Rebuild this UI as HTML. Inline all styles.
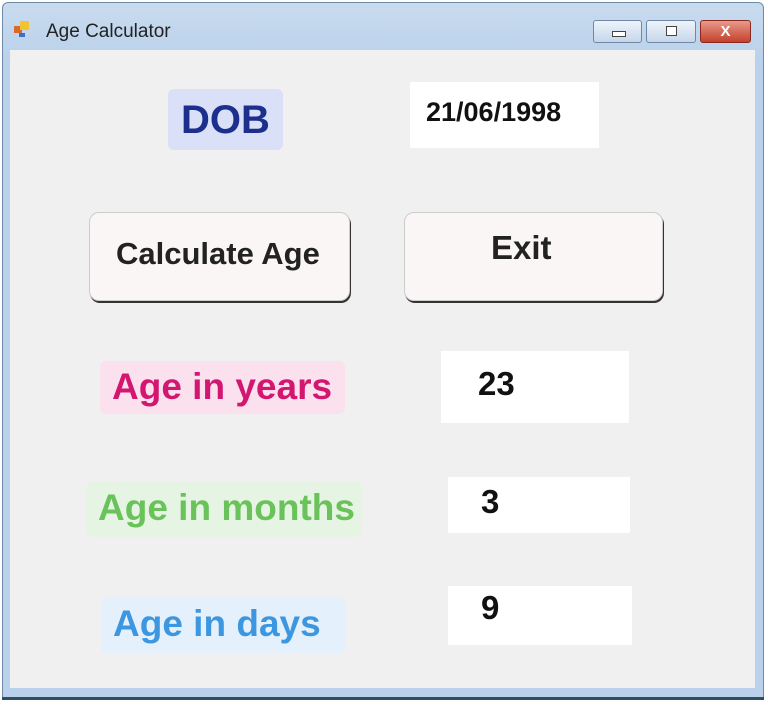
<!DOCTYPE html>
<html><head><style>
body{margin:0;width:768px;height:706px;overflow:hidden;background:#fff;font-family:"Liberation Sans",sans-serif;position:relative}
.frame{position:absolute;left:2px;top:2px;width:762px;height:696px;background:linear-gradient(#c9dbef,#b9d1ea 60px,#b9d1ea);border:1px solid #6e8aa8;border-radius:6px 6px 0 0;box-sizing:border-box}
.client{position:absolute;left:10px;top:50px;width:745px;height:638px;background:#f0f0f0}
.bottom{position:absolute;left:2px;top:697px;width:762px;height:3px;background:#2f4f60}
.t{position:absolute;font-weight:bold;white-space:nowrap}
.box{position:absolute;background:#fff}
.lab{position:absolute;border-radius:6px}
.btn{position:absolute;background:#fbf6f6;border-radius:10px;box-shadow:1px 2px 0 #333;border:1px solid #ccc;box-sizing:border-box}
.wb{position:absolute;top:20px;height:23px;border:1px solid #6f88a6;border-radius:3px;background:linear-gradient(#eef4fb,#c5d6ea);box-sizing:border-box}
</style></head><body>
<div class="frame"></div>
<div style="position:absolute;left:14px;top:26px;width:8px;height:7px;background:#d96a2a"></div>
<div style="position:absolute;left:20px;top:21px;width:9px;height:9px;background:#f2c230"></div>
<div style="position:absolute;left:19px;top:33px;width:6px;height:4px;background:#3d6ec9"></div>
<div class="t" style="left:46px;top:21px;font-weight:normal;font-size:19px;color:#222">Age Calculator</div>
<div class="wb" style="left:593px;width:49px"><div style="position:absolute;left:18px;top:10px;width:12px;height:4px;border:1px solid #444;background:#fff"></div></div>
<div class="wb" style="left:646px;width:50px"><div style="position:absolute;left:19px;top:5px;width:9px;height:8px;border:1px solid #444;background:#fff"></div></div>
<div class="wb" style="left:700px;width:51px;background:linear-gradient(#e89a8a,#c4412c);border-color:#8a2a1f;color:#fff;text-align:center;font-weight:bold;font-size:15px;line-height:21px">X</div>
<div class="client"></div>
<div class="bottom"></div>

<div class="lab" style="left:168px;top:89px;width:115px;height:61px;background:#dae0f8"></div>
<div class="t" style="left:181px;top:98px;font-size:40px;color:#1c2f8c">DOB</div>
<div class="box" style="left:410px;top:82px;width:189px;height:66px"></div>
<div class="t" style="left:426px;top:97px;font-size:27px;color:#111">21/06/1998</div>

<div class="btn" style="left:89px;top:212px;width:261px;height:89px"></div>
<div class="t" style="left:116px;top:236px;font-size:31px;color:#222">Calculate Age</div>
<div class="btn" style="left:404px;top:212px;width:259px;height:89px"></div>
<div class="t" style="left:491px;top:229px;font-size:33px;color:#222">Exit</div>

<div class="lab" style="left:100px;top:361px;width:245px;height:53px;background:#fbe0ee"></div>
<div class="t" style="left:112px;top:366px;font-size:37px;color:#d3166f">Age in years</div>
<div class="box" style="left:441px;top:351px;width:188px;height:72px"></div>
<div class="t" style="left:478px;top:365px;font-size:33px;color:#111">23</div>

<div class="lab" style="left:86px;top:482px;width:276px;height:55px;background:#e6f4e3"></div>
<div class="t" style="left:98px;top:487px;font-size:37px;color:#6ac25a">Age in months</div>
<div class="box" style="left:448px;top:477px;width:182px;height:56px"></div>
<div class="t" style="left:481px;top:483px;font-size:33px;color:#111">3</div>

<div class="lab" style="left:101px;top:597px;width:244px;height:56px;background:#e4f0fb"></div>
<div class="t" style="left:113px;top:603px;font-size:37px;color:#3d97e0">Age in days</div>
<div class="box" style="left:448px;top:586px;width:184px;height:59px"></div>
<div class="t" style="left:481px;top:589px;font-size:33px;color:#111">9</div>
</body></html>
